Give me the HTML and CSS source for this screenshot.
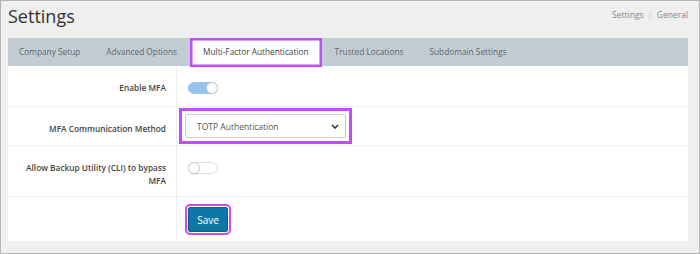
FILE: index.html
```html
<!DOCTYPE html>
<html lang="en">
<head>
  <meta charset="UTF-8">
  <meta name="viewport" content="width=device-width, initial-scale=1.0">
  <title>Settings - General</title>
  <link rel="stylesheet" href="styles.css">
</head>
<body>
  <div class="page">
    <div class="page-header">
      <h1 class="page-title">Settings</h1>
      <ol class="breadcrumb">
        <li>Settings</li>
        <li>General</li>
      </ol>
    </div>
    <div class="panel">
      <ul class="tabs">
        <li class="tab">Company Setup</li>
        <li class="tab">Advanced Options</li>
        <li class="tab tab-active">Multi-Factor Authentication</li>
        <li class="tab">Trusted Locations</li>
        <li class="tab">Subdomain Settings</li>
      </ul>
      <form class="settings-form">
        <!-- Enable MFA -->
        <div class="form-row">
          <label class="form-label">Enable MFA</label>
          <div class="form-field">
            <span class="switch switch-on"><span class="knob"></span></span>
          </div>
        </div>
        <!-- Communication method -->
        <div class="form-row">
          <label class="form-label">MFA Communication Method</label>
          <div class="form-field form-field-select">
            <div class="select-wrap">
              <select class="select">
                <option>TOTP Authentication</option>
              </select>
              <svg class="chevron" viewBox="0 0 8 5" width="8" height="5">
                <path d="M1 1 L4 4 L7 1" fill="none" stroke="#333" stroke-width="1.6"/>
              </svg>
            </div>
          </div>
        </div>
        <!-- Backup utility -->
        <div class="form-row">
          <label class="form-label">Allow Backup Utility (CLI) to bypass MFA</label>
          <div class="form-field">
            <span class="switch"><span class="knob"></span></span>
          </div>
        </div>
        <div class="form-row">
          <div class="form-label"></div>
          <div class="form-field form-field-button">
            <button type="button" class="btn-save">Save</button>
          </div>
        </div>
      </form>
    </div>
  </div>
</body>
</html>
```

FILE: styles.css
```css
body {
  margin: 0;
  font-family: "Open Sans", "Liberation Sans", sans-serif;
}
.page {
  width: 700px;
  height: 254px;
  box-sizing: border-box;
  border: 1px solid #b4b4b4;
  background-color: #efefef;
  padding: 0 11px 0 7px;
}
.page-header {
  display: flex;
  justify-content: space-between;
  align-items: flex-start;
  height: 37px;
  padding-top: 4px;
  box-sizing: border-box;
}
.page-title {
  margin: 0;
  font-size: 18px;
  line-height: 22px;
  font-weight: 400;
  color: #333;
}
.breadcrumb {
  list-style: none;
  margin: 4px 0 0;
  padding: 0;
  display: flex;
  font-size: 8.5px;
  line-height: 12px;
  color: #888;
}
.breadcrumb li + li::before {
  content: "/";
  padding: 0 5px;
  color: #ccc;
}
.panel {
  background-color: #fff;
}
.tabs {
  display: flex;
  margin: 0;
  padding: 0;
  list-style: none;
  height: 28px;
  background-color: #c2cdd3;
}
.tab {
  padding: 0 13px;
  line-height: 28px;
  font-size: 8.3px;
  color: #5c666b;
}
.tab:first-child {
  padding-left: 11px;
}
.tab-active {
  height: 29px;
  box-sizing: border-box;
  background-color: #fff;
  color: #444;
  box-shadow: inset 0 0 0 2.5px #c54cf5;
}
.form-row {
  display: flex;
  border-bottom: 1px solid #eee;
}
.form-row:last-child {
  border-bottom: 0;
}
.form-label {
  width: 158px;
  flex: none;
  padding: 15px 10px 9px 0;
  text-align: right;
  border-right: 1px solid #eee;
  font-size: 8.3px;
  line-height: 13px;
  font-weight: 600;
  color: #444;
}
.form-field {
  flex: 1;
  padding: 16px 11px 12px;
}
.form-field-select {
  padding: 7px 8px;
}
.form-field-button {
  padding: 10px 11px 9px;
}
.switch {
  display: block;
  position: relative;
  width: 30px;
  height: 12px;
  box-sizing: border-box;
  border: 1px solid #ddd;
  border-radius: 6px;
  background-color: #fff;
}
.switch-on {
  background-color: #96c3ef;
  border-color: #96c3ef;
}
.knob {
  position: absolute;
  top: -1px;
  left: -1px;
  width: 12px;
  height: 12px;
  box-sizing: border-box;
  border: 1px solid #ccc;
  border-radius: 50%;
  background-color: #fff;
  box-shadow: 0 1px 1px rgba(0, 0, 0, 0.08);
}
.switch-on .knob {
  left: auto;
  right: -1px;
}
.select-wrap {
  position: relative;
  display: inline-block;
  vertical-align: top;
  outline: 3px solid #c54cf5;
  outline-offset: 3px;
}
.select {
  display: block;
  appearance: none;
  width: 161px;
  height: 24px;
  margin: 0;
  padding: 0 20px 0 11px;
  border: 1px solid #ccc;
  border-radius: 2px;
  background-color: #fff;
  font-family: "Open Sans", "Liberation Sans", sans-serif;
  font-size: 8.5px;
  color: #555;
}
.chevron {
  position: absolute;
  right: 7px;
  top: 10px;
  pointer-events: none;
}
.btn-save {
  display: block;
  width: 40px;
  height: 25px;
  padding: 0;
  border: 1px solid #08628a;
  border-radius: 2px;
  background-color: #0d78a6;
  color: #fff;
  font-family: "Open Sans", "Liberation Sans", sans-serif;
  font-size: 10px;
  outline: 2.5px solid #c54cf5;
  outline-offset: 1px;
}
```
